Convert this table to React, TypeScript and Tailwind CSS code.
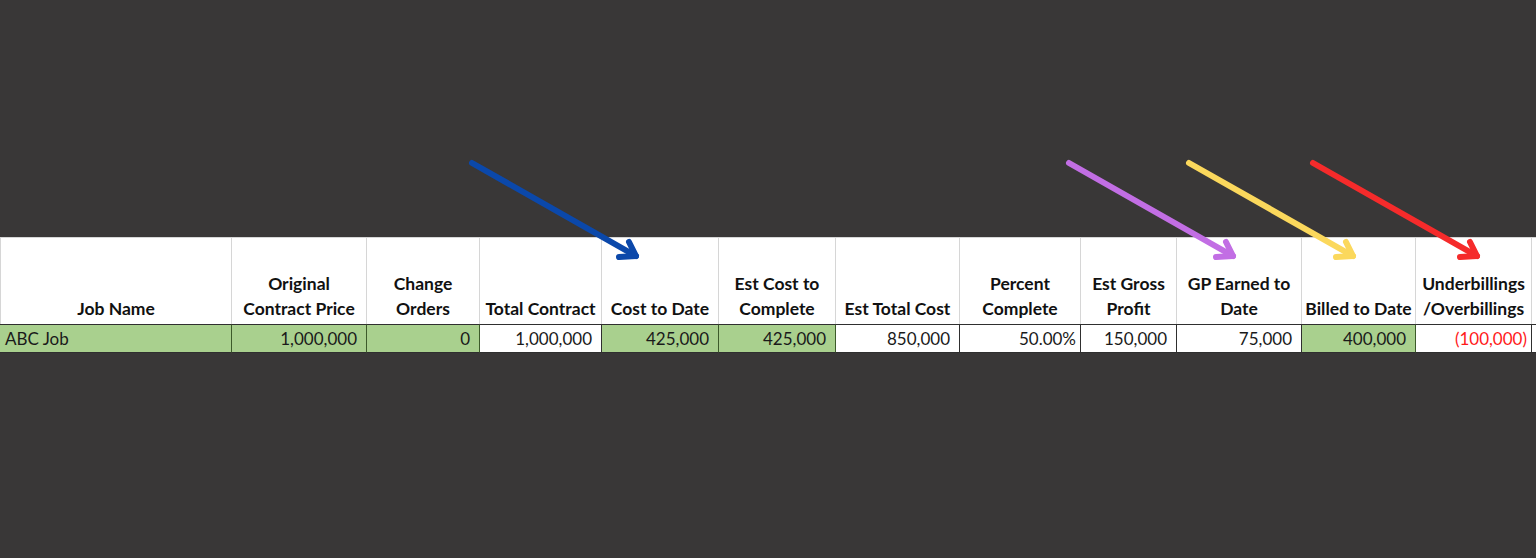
import React from 'react';

type Col = {
  width: string;
  header: string[];
  value: string;
  green?: boolean;
  align?: 'left' | 'right';
  tight?: boolean;
  red?: boolean;
};

const columns: Col[] = [
  { width: '232px', header: ['Job Name'], value: 'ABC Job', green: true, align: 'left' },
  { width: '135px', header: ['Original', 'Contract Price'], value: '1,000,000', green: true },
  { width: '113px', header: ['Change', 'Orders'], value: '0', green: true },
  { width: '122px', header: ['Total Contract'], value: '1,000,000' },
  { width: '117px', header: ['Cost to Date'], value: '425,000', green: true },
  { width: '117px', header: ['Est Cost to', 'Complete'], value: '425,000', green: true },
  { width: '124px', header: ['Est Total Cost'], value: '850,000' },
  { width: '121px', header: ['Percent', 'Complete'], value: '50.00%', tight: true },
  { width: '96px', header: ['Est Gross', 'Profit'], value: '150,000' },
  { width: '125px', header: ['GP Earned to', 'Date'], value: '75,000' },
  { width: '114px', header: ['Billed to Date'], value: '400,000', green: true },
  { width: '116px', header: ['Underbillings', '/Overbillings'], value: '(100,000)', tight: true, red: true },
];

const arrows = [
  { from: [472, 163], to: [636, 256], color: '#0b48aa' },
  { from: [1069, 163], to: [1233, 256], color: '#c26ee4' },
  { from: [1189, 163], to: [1353, 256], color: '#fbd85c' },
  { from: [1313, 163], to: [1477, 256], color: '#f52b2b' },
];

const Arrow = ({ from, to, color }: { from: number[]; to: number[]; color: string }) => {
  const [x1, y1] = from;
  const [x2, y2] = to;
  return (
    <g stroke={color} strokeWidth={6} strokeLinecap="round" strokeLinejoin="round" fill="none">
      <line x1={x1} y1={y1} x2={x2} y2={y2} />
      <polyline points={`${x2 - 17},${y2 + 1} ${x2},${y2} ${x2 - 7},${y2 - 14}`} />
    </g>
  );
};

export default function App() {
  return (
    <div className="relative w-[1536px] h-[558px] bg-[#393737] pt-[237px] overflow-hidden" style={{ fontFamily: 'Lato, "Noto Sans", sans-serif' }}>
      <div className="grid grid-cols-[232px_135px_113px_122px_117px_117px_124px_121px_96px_125px_114px_116px_1fr]">
        {columns.map((c, i) => (
          <div
            key={'h' + i}
            className={`h-[87px] bg-white border-t border-r border-[#d6d6d6] flex flex-col items-center justify-end pb-[3px] text-[17.5px] leading-[25px] font-bold text-[#111] text-center whitespace-nowrap ${i === 0 ? 'border-l' : ''}`}
          >
            {c.header.map((line) => (
              <span key={line}>{line}</span>
            ))}
          </div>
        ))}
        <div className="h-[87px] bg-white border-t border-[#d6d6d6]" />

        {columns.map((c, i) => (
          <div
            key={'d' + i}
            className={`h-[29px] border-y border-r border-y-[#2f2f2f] flex items-center text-[17px] leading-none whitespace-nowrap ${
              c.green ? 'bg-[#a9d08e] border-r-[#3d5a2a]' : 'bg-white border-r-[#2f2f2f]'
            } ${c.align === 'left' ? 'justify-start pl-[5px]' : c.tight ? 'justify-end pr-[4px]' : 'justify-end pr-[9px]'} ${
              c.red ? 'text-[#ff1a1a]' : 'text-[#1a1a1a]'
            }`}
          >
            {c.value}
          </div>
        ))}
        <div className="h-[29px] bg-white border-y border-y-[#2f2f2f]" />
      </div>

      <svg className="absolute inset-0 pointer-events-none" width="1536" height="558" viewBox="0 0 1536 558">
        {arrows.map((a, i) => (
          <Arrow key={i} {...a} />
        ))}
      </svg>
    </div>
  );
}
